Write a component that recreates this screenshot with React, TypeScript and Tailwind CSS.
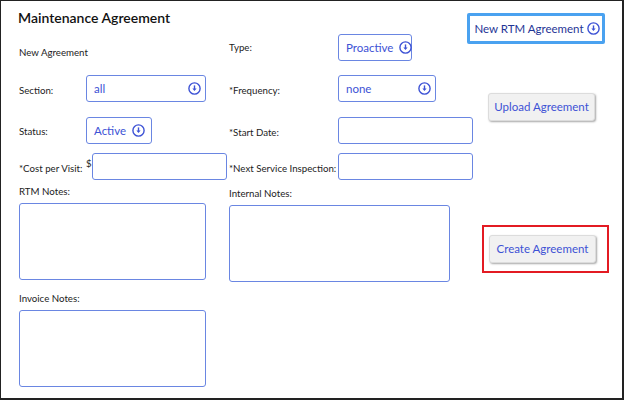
import React from "react";

function DropIcon() {
  return (
    <svg width="13" height="13" viewBox="0 0 13 13" className="shrink-0">
      <circle cx="6.5" cy="6.5" r="5.6" fill="none" stroke="#3d52d5" strokeWidth="1.4" />
      <path d="M6.5 3.4 V7" stroke="#3d52d5" strokeWidth="1.4" />
      <path d="M4.4 6.4 H8.6 L6.5 9 Z" fill="#3d52d5" />
    </svg>
  );
}

function SelectBox({ value, width, spread }: { value: string; width: string; spread?: boolean }) {
  return (
    <div
      className={`flex h-[27px] items-center rounded-[3px] border border-[#6a86e2] bg-white pl-[7px] pr-[4px] text-[11.5px] text-[#3d52d5] ${width} ${
        spread ? "justify-between" : "gap-[6px]"
      }`}
    >
      <span className="whitespace-nowrap">{value}</span>
      <DropIcon />
    </div>
  );
}

function TextBox({ width }: { width: string }) {
  return <div className={`h-[27px] shrink-0 rounded-[3px] border border-[#6a86e2] bg-white ${width}`} />;
}

function NoteBox({ width }: { width: string }) {
  return <div className={`h-[77px] rounded-[3px] border border-[#6a86e2] bg-white ${width}`} />;
}

function GrayButton({ label }: { label: string }) {
  return (
    <button className="h-[28px] w-[107px] rounded-[3px] border border-[#dcdcdc] bg-[#f1f1f1] text-[11.5px] text-[#3d52d5] shadow-[1px_1px_2px_rgba(0,0,0,0.35)]">
      {label}
    </button>
  );
}

const row = "grid h-[27px] grid-cols-[67px_143px_109px_1fr] items-center whitespace-nowrap pl-[18px]";

export default function App() {
  return (
    <div
      className="flex h-[400px] w-[624px] border-t border-l border-r-2 border-b-2 border-[#222] bg-white text-[9.7px] text-[#222]"
      style={{ fontFamily: "Lato, 'Open Sans', sans-serif" }}
    >
      <div className="flex w-[465px] flex-col">
        <h1 className="pl-[17px] pt-[6px] text-[14px] font-semibold leading-[21px] text-[#111]">
          Maintenance Agreement
        </h1>

        <div className={`${row} mt-[6px]`}>
          <div className="col-span-2 self-end pb-[1px]">New Agreement</div>
          <div className="pb-[1px]">Type:</div>
          <SelectBox value="Proactive" width="w-[74px]" />
        </div>

        <div className={`${row} mt-[14px]`}>
          <div className="pt-[3px]">Section:</div>
          <SelectBox value="all" width="w-[120px]" spread />
          <div className="pt-[3px]">*Frequency:</div>
          <SelectBox value="none" width="w-[98px]" spread />
        </div>

        <div className={`${row} mt-[15px]`}>
          <div className="pt-[1px]">Status:</div>
          <SelectBox value="Active" width="w-[66px]" />
          <div className="pt-[3px]">*Start Date:</div>
          <TextBox width="w-[135px]" />
        </div>

        <div className={`${row} mt-[9px]`}>
          <div className="pt-[3px]">*Cost per Visit:</div>
          <div className="flex h-[27px]">
            <span className="pt-[3px] leading-[14px]">$</span>
            <TextBox width="w-[135px]" />
          </div>
          <div className="pt-[3px]">*Next Service Inspection:</div>
          <TextBox width="w-[135px]" />
        </div>

        <div className="mt-[4px] flex pl-[18px]">
          <div className="flex w-[210px] flex-col">
            <div className="leading-[14px]">RTM Notes:</div>
            <div className="mt-[5px]">
              <NoteBox width="w-[187px]" />
            </div>
            <div className="mt-[11px] leading-[14px]">Invoice Notes:</div>
            <div className="mt-[5px]">
              <NoteBox width="w-[187px]" />
            </div>
          </div>
          <div className="flex flex-col pt-[2px]">
            <div className="leading-[14px]">Internal Notes:</div>
            <div className="mt-[5px]">
              <NoteBox width="w-[221px]" />
            </div>
          </div>
        </div>
      </div>

      <div className="flex flex-1 flex-col items-start">
        <button className="ml-[1px] mt-[12px] flex h-[31px] w-[138px] items-center justify-center gap-[3px] rounded-[2px] border-[3px] border-[#4aa2f0] bg-white pl-[2px] text-[11.5px] text-[#1f3596]">
          <span className="whitespace-nowrap">New RTM Agreement</span>
          <DropIcon />
        </button>
        <div className="ml-[22px] mt-[49px]">
          <GrayButton label="Upload Agreement" />
        </div>
        <div className="ml-[16px] mt-[104px] border-2 border-[#e31b23] pb-[8px] pl-[5px] pr-[11px] pt-[8px]">
          <GrayButton label="Create Agreement" />
        </div>
      </div>
    </div>
  );
}
